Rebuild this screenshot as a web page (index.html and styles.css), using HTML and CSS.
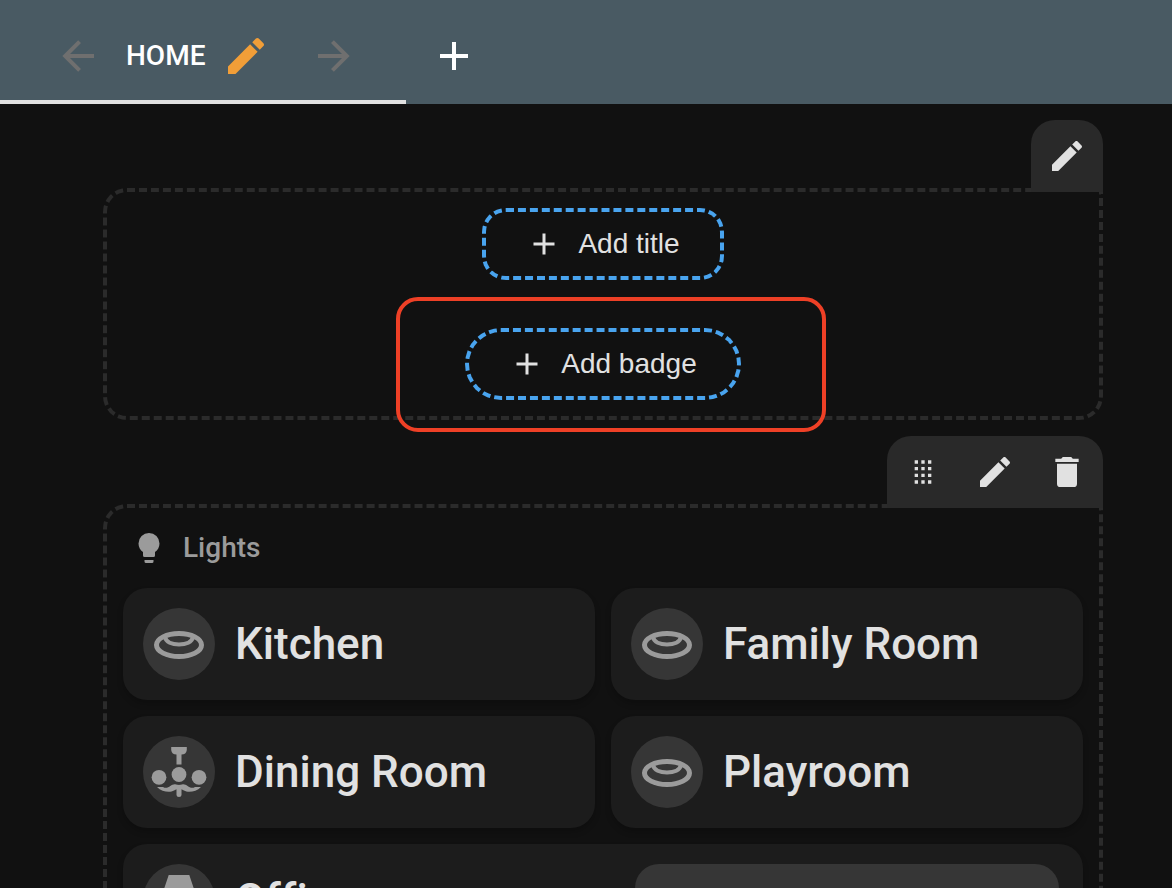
FILE: index.html
```
<!DOCTYPE html>
<html lang="en">
<head>
    <meta charset="UTF-8">
    <meta name="viewport" content="width=device-width, initial-scale=1.0">
    <title>Home</title>
    <link rel="stylesheet" href="styles.css">
</head>
<body>
    <!-- shared icons -->
    <svg class="sprite" aria-hidden="true">
        <symbol id="icon-pencil" viewBox="0 0 24 24">
            <path d="M20.71,7.04C21.1,6.65 21.1,6 20.71,5.63L18.37,3.29C18,2.9 17.35,2.9 16.96,3.29L15.12,5.12L18.87,8.87M3,17.25V21H6.75L17.81,9.93L14.06,6.18L3,17.25Z"/>
        </symbol>
        <symbol id="icon-plus" viewBox="0 0 24 24">
            <path d="M19,13H13V19H11V13H5V11H11V5H13V11H19V13Z"/>
        </symbol>
        <symbol id="icon-ring" viewBox="-30 -30 60 60">
            <g fill="none" stroke="currentColor" stroke-width="5">
                <ellipse cx="0" cy="1" rx="22.5" ry="11.5"/>
                <path stroke-width="4" d="M-14 -7C-13 -2 -7 0.6 0 0.6S13 -2 14 -7"/>
            </g>
        </symbol>
    </svg>

    <header class="header">
        <nav class="tab active">
            <button class="move-btn" aria-label="Move left" disabled>
                <svg class="icon-lg" viewBox="0 0 24 24"><path d="M20,11V13H8L13.5,18.5L12.08,19.92L4.16,12L12.08,4.08L13.5,5.5L8,11H20Z"/></svg>
            </button>
            <a class="tab-label" href="#home">HOME</a>
            <button class="edit-btn" aria-label="Edit view">
                <svg class="icon-lg"><use href="#icon-pencil"/></svg>
            </button>
            <button class="move-btn" aria-label="Move right" disabled>
                <svg class="icon-lg" viewBox="0 0 24 24"><path d="M4,11V13H16L10.5,18.5L11.92,19.92L19.84,12L11.92,4.08L10.5,5.5L16,11H4Z"/></svg>
            </button>
        </nav>
        <button class="add-view" aria-label="Add view">
            <svg class="icon-lg"><use href="#icon-plus"/></svg>
        </button>
    </header>

    <main class="view" id="home">
        <section class="section">
            <div class="section-toolbar">
                <button class="tool-btn" aria-label="Edit header">
                    <svg class="icon-md"><use href="#icon-pencil"/></svg>
                </button>
            </div>
            <div class="section-frame header-frame">
                <button class="add-btn">
                    <svg class="icon-sm"><use href="#icon-plus"/></svg>
                    Add title
                </button>
                <div class="badge-row">
                    <button class="add-btn round">
                        <svg class="icon-sm"><use href="#icon-plus"/></svg>
                        Add badge
                    </button>
                    <div class="highlight"></div>
                </div>
            </div>
        </section>

        <section class="section">
            <div class="section-toolbar">
                <button class="tool-btn" aria-label="Move section">
                    <svg class="icon-md" viewBox="0 0 24 24"><path d="M7,19V17H9V19H7M11,19V17H13V19H11M15,19V17H17V19H15M7,15V13H9V15H7M11,15V13H13V15H11M15,15V13H17V15H15M7,11V9H9V11H7M11,11V9H13V11H11M15,11V9H17V11H15M7,7V5H9V7H7M11,7V5H13V7H11M15,7V5H17V7H15Z"/></svg>
                </button>
                <button class="tool-btn" aria-label="Edit section">
                    <svg class="icon-md"><use href="#icon-pencil"/></svg>
                </button>
                <button class="tool-btn" aria-label="Delete section">
                    <svg class="icon-md" viewBox="0 0 24 24"><path d="M19,4H15.5L14.5,3H9.5L8.5,4H5V6H19M6,19A2,2 0 0,0 8,21H16A2,2 0 0,0 18,19V7H6V19Z"/></svg>
                </button>
            </div>
            <div class="section-frame">
                <h2 class="section-heading">
                    <svg class="icon-sm" viewBox="0 0 24 24"><path d="M12,2A7,7 0 0,0 5,9C5,11.38 6.19,13.47 8,14.74V17A1,1 0 0,0 9,18H15A1,1 0 0,0 16,17V14.74C17.81,13.47 19,11.38 19,9A7,7 0 0,0 12,2M9,21A1,1 0 0,0 10,22H14A1,1 0 0,0 15,21V20H9V21Z"/></svg>
                    Lights
                </h2>
                <div class="card-grid">
                    <div class="card">
                        <button class="card-icon" aria-label="Toggle Kitchen">
                            <svg><use href="#icon-ring"/></svg>
                        </button>
                        <span class="card-name">Kitchen</span>
                    </div>
                    <div class="card">
                        <button class="card-icon" aria-label="Toggle Family Room">
                            <svg><use href="#icon-ring"/></svg>
                        </button>
                        <span class="card-name">Family Room</span>
                    </div>
                    <div class="card">
                        <button class="card-icon" aria-label="Toggle Dining Room">
                            <svg viewBox="-30 -30 60 60">
                                <path d="M-7.8 -25H7.8V-22Q7.2 -17.5 2.5 -17.5V-7.5H-2.5V-17.5Q-7.2 -17.5 -7.8 -22Z"/>
                                <circle cx="0" cy="2.5" r="7.4"/>
                                <circle cx="-20" cy="5.3" r="7.4"/>
                                <circle cx="20" cy="5.3" r="7.4"/>
                                <path d="M-22 15H-16C-11 18 -8 12 -4 12.3C-2 12.5 -1.5 13 0 13S2 12.5 4 12.3C8 12 11 18 16 15H22C17 20 9 21 5 18.5L2.5 17.3V23Q2.5 25 0 25T-2.5 23V17.3L-5 18.5C-9 21 -17 20 -22 15Z"/>
                            </svg>
                        </button>
                        <span class="card-name">Dining Room</span>
                    </div>
                    <div class="card">
                        <button class="card-icon" aria-label="Toggle Playroom">
                            <svg><use href="#icon-ring"/></svg>
                        </button>
                        <span class="card-name">Playroom</span>
                    </div>
                    <div class="card wide">
                        <div class="card-info">
                            <button class="card-icon" aria-label="Toggle Office">
                                <svg viewBox="-30 -30 60 60"><path d="M-10.3 -25H10.3L20 4H-20ZM-2.5 4H2.5V20H10V25H-10V20H-2.5Z"/></svg>
                            </button>
                            <label class="card-name" for="office-brightness">Office</label>
                        </div>
                        <div class="card-feature">
                            <input class="slider" type="range" id="office-brightness" min="0" max="100" value="0">
                        </div>
                    </div>
                </div>
            </div>
        </section>
    </main>
</body>
</html>
```
FILE: styles.css
```
* {
    margin: 0;
    padding: 0;
    box-sizing: border-box;
}

body {
    font-family: Roboto, "Noto Sans", sans-serif;
    font-variant-ligatures: none;
    background-color: #111111;
    color: #e1e1e1;
    height: 100vh;
    display: flex;
    flex-direction: column;
}

button {
    background: none;
    border: none;
    color: inherit;
    cursor: pointer;
}

svg {
    display: block;
    fill: currentColor;
    flex-shrink: 0;
}

.sprite {
    position: absolute;
    width: 0;
    height: 0;
}

.icon-lg {
    width: 48px;
    height: 48px;
}

.icon-md {
    width: 40px;
    height: 40px;
}

.icon-sm {
    width: 36px;
    height: 36px;
}

/* top bar */
.header {
    flex-shrink: 0;
    display: flex;
    align-items: stretch;
    padding-top: 8px;
    background: #495a63;
}

.tab {
    display: flex;
    align-items: center;
    height: 96px;
    padding: 0 48px 0 54px;
}

.tab.active {
    box-shadow: inset 0 -4px 0 #e1e1e1;
}

.tab-label {
    margin: 0 17px 0 24px;
    font-size: 28px;
    line-height: 32px;
    font-weight: 500;
    color: #ffffff;
    text-decoration: none;
}

.move-btn {
    color: #6f6f6f;
}

.edit-btn {
    margin-right: 40px;
    color: #f19e38;
}

.add-view {
    padding: 0 24px;
    color: #ffffff;
}

/* view */
.view {
    flex: 1;
    min-height: 0;
    overflow-y: auto;
    scrollbar-width: none;
    padding: 16px 69px 16px 103px;
}

.section {
    margin-bottom: 16px;
}

.section-toolbar {
    position: relative;
    z-index: 1;
    display: flex;
    width: fit-content;
    margin: 0 0 -4px auto;
    background: #292929;
    border-radius: 24px 24px 0 0;
}

.tool-btn {
    padding: 16px;
}

.section-frame {
    padding: 16px;
    border: 4px dashed #2b2b2b;
    border-radius: 24px 0 24px 24px;
}

.header-frame {
    display: flex;
    flex-direction: column;
    align-items: center;
    gap: 48px;
}

.add-btn {
    display: flex;
    align-items: center;
    gap: 16px;
    height: 72px;
    padding: 0 40px;
    border: 4px dashed #49a4ef;
    border-radius: 24px;
    font-family: "Liberation Sans", Arial, sans-serif;
    font-size: 28px;
}

.add-btn.round {
    border-radius: 36px;
}

.badge-row {
    position: relative;
}

.highlight {
    position: absolute;
    z-index: 2;
    top: -31px;
    right: -85px;
    bottom: -32px;
    left: -69px;
    border: 4px solid #ee4026;
    border-radius: 22px;
    pointer-events: none;
}

.section-heading {
    display: flex;
    align-items: center;
    gap: 16px;
    height: 48px;
    margin-bottom: 16px;
    padding: 0 8px;
    font-size: 28px;
    line-height: 32px;
    font-weight: 500;
    color: #9b9b9b;
}

/* cards */
.card-grid {
    display: grid;
    grid-template-columns: 1fr 1fr;
    gap: 16px;
}

.card {
    display: flex;
    align-items: center;
    gap: 20px;
    padding: 20px;
    background: #1c1c1c;
    border-radius: 24px;
    box-shadow: 0 4px 6px rgba(0, 0, 0, 0.2);
}

.card.wide {
    display: grid;
    grid-template-columns: 1fr 1fr;
    grid-column: span 2;
    gap: 0;
}

.card-icon {
    display: flex;
    align-items: center;
    justify-content: center;
    width: 72px;
    height: 72px;
    border-radius: 50%;
    background: #363636;
    color: #9b9b9b;
}

.card-icon svg {
    width: 60px;
    height: 60px;
}

.card-name {
    font-size: 44px;
    line-height: 53px;
    font-weight: 500;
}

.card-info {
    display: flex;
    align-items: center;
    gap: 20px;
}

.card-feature {
    padding: 0 4px 0 32px;
}

.slider {
    display: block;
    appearance: none;
    width: 100%;
    height: 72px;
    border-radius: 24px;
    background: #363636;
}

.slider::-webkit-slider-thumb {
    appearance: none;
    width: 0;
    height: 0;
}
```
